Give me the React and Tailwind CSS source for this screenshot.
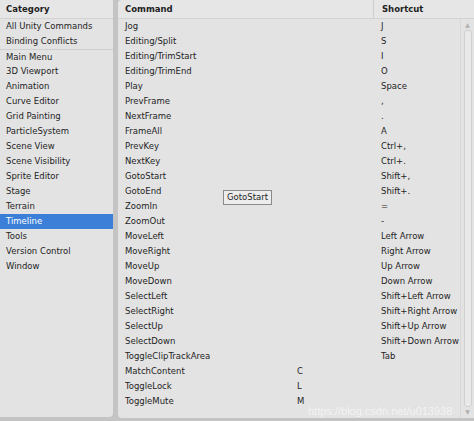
import React from "react";

const CATEGORIES = [
  "All Unity Commands",
  "Binding Conflicts",
  "Main Menu",
  "3D Viewport",
  "Animation",
  "Curve Editor",
  "Grid Painting",
  "ParticleSystem",
  "Scene View",
  "Scene Visibility",
  "Sprite Editor",
  "Stage",
  "Terrain",
  "Timeline",
  "Tools",
  "Version Control",
  "Window",
];

// [command, mid column, shortcut]
const COMMANDS = [
  ["Jog", "", "J"],
  ["Editing/Split", "", "S"],
  ["Editing/TrimStart", "", "I"],
  ["Editing/TrimEnd", "", "O"],
  ["Play", "", "Space"],
  ["PrevFrame", "", ","],
  ["NextFrame", "", "."],
  ["FrameAll", "", "A"],
  ["PrevKey", "", "Ctrl+,"],
  ["NextKey", "", "Ctrl+."],
  ["GotoStart", "", "Shift+,"],
  ["GotoEnd", "", "Shift+."],
  ["ZoomIn", "", "="],
  ["ZoomOut", "", "-"],
  ["MoveLeft", "", "Left Arrow"],
  ["MoveRight", "", "Right Arrow"],
  ["MoveUp", "", "Up Arrow"],
  ["MoveDown", "", "Down Arrow"],
  ["SelectLeft", "", "Shift+Left Arrow"],
  ["SelectRight", "", "Shift+Right Arrow"],
  ["SelectUp", "", "Shift+Up Arrow"],
  ["SelectDown", "", "Shift+Down Arrow"],
  ["ToggleClipTrackArea", "", "Tab"],
  ["MatchContent", "C", ""],
  ["ToggleLock", "L", ""],
  ["ToggleMute", "M", ""],
];

const font = { fontFamily: "'DejaVu Sans', Verdana, sans-serif" };

export default function App() {
  return (
    <div
      className="w-[474px] h-[421px] bg-[#c4c4c4] flex gap-[5px] overflow-hidden text-[8.5px] text-[#1e1e1e]"
      style={font}
    >
      {/* Category list */}
      <div className="w-[113px] h-[417px] bg-[#e3e3e3] rounded-r-[4px] flex flex-col shrink-0">
        <div className="h-[19px] flex items-center pl-[6px] font-bold bg-[#e6e6e6] border-b border-[#d2d2d2]">
          Category
        </div>
        {CATEGORIES.map((c, i) => (
          <div
            key={c}
            className={[
              "h-[15px] flex items-center pl-[6px] whitespace-nowrap",
              i === 2 ? "border-t border-[#cfcfcf]" : "",
              c === "Timeline" ? "bg-[#3c7fd9] text-white" : "",
            ].join(" ")}
          >
            {c}
          </div>
        ))}
      </div>

      {/* Command table */}
      <div className="relative flex-1 h-[418px] bg-[#e3e3e3] rounded-l-[4px] flex flex-col overflow-hidden">
        <div className="h-[19px] flex items-center font-bold bg-[#e6e6e6] border-b border-[#d2d2d2] shrink-0">
          <div className="w-[255px] pl-[7px]">Command</div>
          <div className="h-full border-l border-[#cfcfcf] pl-[8px] flex items-center">Shortcut</div>
        </div>
        <div className="flex flex-1 min-h-0">
          <div className="flex-1 flex flex-col overflow-hidden">
            {COMMANDS.map(([cmd, mid, sc]) => (
              <div key={cmd} className="h-[15px] flex items-center whitespace-nowrap shrink-0">
                <div className="w-[179px] shrink-0 pl-[7px]">{cmd}</div>
                <div className="w-[84px] shrink-0">{mid}</div>
                <div>{sc}</div>
              </div>
            ))}
          </div>
          {/* Scrollbar */}
          <div className="w-[14px] flex flex-col items-center pt-[3px] pb-[3px] border-l border-[#d8d8d8] bg-[#e3e3e3]">
            <span className="text-[6px] leading-none text-[#b0b0b0]">▲</span>
            <div className="flex-1 w-[8px] mt-[2px] mb-[2px] rounded-[3px] border border-[#d0d0d0] bg-[#e9e9e9]" />
            <span className="text-[6px] leading-none text-[#b0b0b0]">▼</span>
          </div>
        </div>

        {/* Tooltip */}
        <div className="absolute left-[105px] top-[190px] h-[15px] px-[3px] flex items-center bg-[#ececec] border border-[#8a8a8a]">
          GotoStart
        </div>

        {/* Watermark */}
        <div
          className="absolute left-[190px] top-[403px] text-[11px] text-white/60"
          style={{ fontFamily: "'Liberation Sans', Arial, sans-serif" }}
        >
          https://blog.csdn.net/u013938
        </div>
      </div>
    </div>
  );
}
